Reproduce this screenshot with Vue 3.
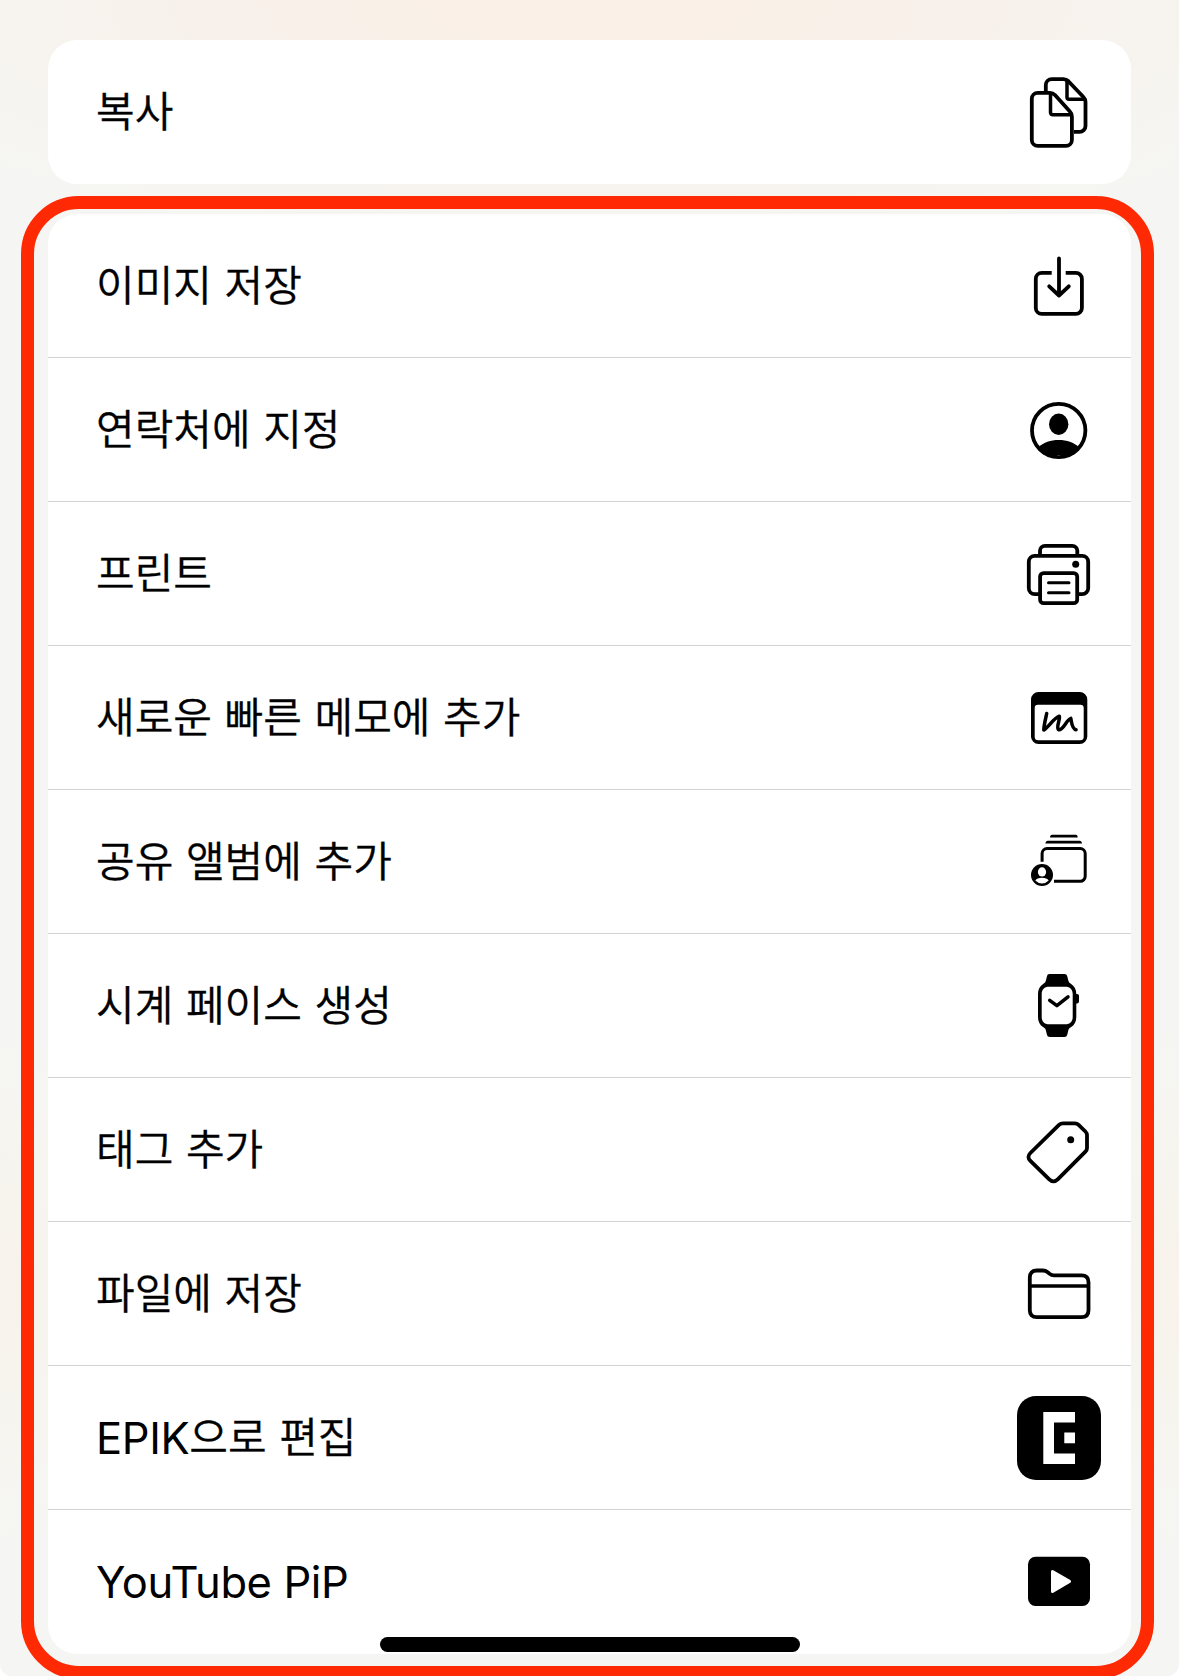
<template>
  <div class="share-sheet">
    <section class="card">
      <div class="row">
        <span class="label">복사</span>
        <svg class="icon" viewBox="0 0 84 84">
          <path d="M28.8 21V15.1a6 6 0 0 1 6-6h11.6c2 0 3.5.6 5 2.1L66.4 27c1.4 1.4 2.1 3 2.1 5v23.9a6 6 0 0 1-6 6H57" />
          <path class="fold" d="M50 11v16.2a2 2 0 0 0 2 2h15.5" />
          <path d="M33 22.8H20.8a6 6 0 0 0-6 6v41.1a6 6 0 0 0 6 6h28.1a6 6 0 0 0 6-6V46.5c0-2-.6-3.5-2-4.900L38 25c-1.500-1.500-3-2.200-5-2.200Z" />
          <path class="fold" d="M33.500 24v18.600a2.200 2.200 0 0 0 2.200 2.200H54" />
        </svg>
      </div>
    </section>

    <section class="card">
      <div v-for="item in actions" :key="item.icon" class="row">
        <span class="label"><span v-if="item.latin" class="latin">{{ item.latin }}</span>{{ item.label }}</span>

        <svg class="icon" viewBox="0 0 84 84">
          <g v-if="item.icon === 'save'">
            <path d="M34.700 28.800h-9.900a6 6 0 0 0-6 6v29.100a6 6 0 0 0 6 6h34.100a6 6 0 0 0 6-6V34.800a6 6 0 0 0-6-6H48.700" />
            <path class="round" d="M42 14.300v36.800M32.200 42.300l9.800 9.200 9.800-9.200" />
          </g>

          <g v-else-if="item.icon === 'contact'">
            <circle cx="41.700" cy="42.500" r="26.700" />
            <ellipse class="solid" cx="41.700" cy="36.300" rx="9.700" ry="10.700" />
            <path class="solid" d="M22 59c4.500-4.800 11.500-7 19.700-7s15.200 2.200 19.700 7v2l-5 6H27l-5-6Z" />
          </g>

          <g v-else-if="item.icon === 'print'">
            <path d="M23 23v-4.200a5 5 0 0 1 5-5h27.300a5 5 0 0 1 5 5V23" />
            <path d="M22 62.200h-4.200a6 6 0 0 1-6-6V29.800a6 6 0 0 1 6-6h47.400a6 6 0 0 1 6 6v26.400a6 6 0 0 1-6 6H61" />
            <rect x="23.100" y="41.100" width="37.100" height="30.100" rx="3.500" />
            <path class="thin round" d="M31.500 50.700h20.500M31.500 60.700h20.500" />
            <circle class="solid" cx="58.700" cy="32.300" r="3.500" />
          </g>

          <g v-else-if="item.icon === 'memo'">
            <path class="solid" fill-rule="evenodd" d="M21.500 16h41.300a7.500 7.500 0 0 1 7.500 7.500v37a7.500 7.500 0 0 1-7.500 7.500H21.500a7.500 7.500 0 0 1-7.500-7.500v-37a7.500 7.500 0 0 1 7.500-7.500ZM21 28.700a3.300 3.300 0 0 0-3.300 3.300v28.800a3.500 3.500 0 0 0 3.500 3.500h42a3.500 3.500 0 0 0 3.500-3.500V32a3.300 3.300 0 0 0-3.300-3.300Z" />
            <path class="fold round" d="M29.700 37.500c-1 5-2.800 11.500-2.900 16.600C31.500 51 37 42 42.300 40.200c1.200 3-3.600 11-.7 13.600 4.600 1 8-10.300 12.200-11.400.8 3.500 1 10.600 5.300 11.300" />
          </g>

          <g v-else-if="item.icon === 'album'">
            <path class="solid" d="M35 14.800h24c.9 0 1.700 1.200 1.700 2.600H33c0-1.400 1-2.600 2-2.600ZM31 20.800h31.500c1.400 0 2.500 1.200 2.500 2.700H28.400c0-1.500 1.100-2.700 2.600-2.700Z" />
            <path class="thin" d="M25.100 41.700v-8.100a5 5 0 0 1 5-5h33.100a5 5 0 0 1 5 5v22.700a5 5 0 0 1-5 5H37" />
            <circle class="solid" cx="25" cy="55" r="11" />
            <ellipse class="paper" cx="25" cy="51.900" rx="4.100" ry="4.600" />
            <path class="paper" d="M18.300 60.500c1.200-1.900 3.600-2.800 6.700-2.800s5.500.9 6.700 2.800a9.200 9.200 0 0 1-13.400 0Z" />
          </g>

          <g v-else-if="item.icon === 'watch'">
            <path class="solid" fill-rule="evenodd" d="M32.500 10h14.700c1.800 0 2.700.8 3.100 2.500l1 4c.5 1.700 1 2.300 2.500 3.200 3.700 2.300 5.500 5.600 5.500 10.300h.7c1.300 0 2 .8 2 2.200v5c0 1.400-.7 2.200-2 2.200h-.7V53c0 4.700-1.800 8-5.500 10.300-1.500.9-2 1.500-2.500 3.200l-1 4c-.4 1.700-1.300 2.500-3.100 2.500H33c-1.800 0-2.700-.8-3.100-2.500l-1-4c-.5-1.700-1-2.300-2.500-3.200C22.800 61 21 57.700 21 53V30c0-4.700 1.800-8 5.400-10.300 1.500-.9 2-1.500 2.500-3.200l1-4c.4-1.700 1.100-2.500 2.600-2.500ZM32 22.700c-4.600 0-7.300 2.700-7.300 7.300v23c0 4.600 2.700 7.300 7.300 7.300h16.400c4.600 0 7.300-2.700 7.300-7.300V30c0-4.600-2.700-7.300-7.300-7.300Z" />
            <path class="fold round" d="m32.700 36.300 7.200 5.400L51 32.800" />
          </g>

          <g v-else-if="item.icon === 'tag'">
            <path d="M46 15.400h11.800c1.600 0 2.700.4 3.800 1.500l6.800 6.600c1.100 1.100 1.600 2.200 1.600 3.800v12.600c0 1.600-.5 2.700-1.600 3.800L41 71.200c-3 3-6 3-9 0L13.400 52.800c-2.600-2.600-2.600-5.200 0-7.800L42 16.900c1.200-1.100 2.400-1.500 4-1.500Z" />
            <circle class="solid" cx="53.700" cy="31.700" r="3.500" />
          </g>

          <g v-else-if="item.icon === 'folder'">
            <path d="M12.800 25.500c0-4.700 2.400-7 7-7h6c2 0 3.400.5 4.900 1.700l2 1.700c1.300 1.100 2.500 1.500 4.300 1.500h27.500c4.600 0 7 2.300 7 6.900v28c0 4.600-2.400 6.900-7 6.900H19.800c-4.600 0-7-2.300-7-6.900Z" />
            <path class="fold" d="M13 34h58" />
          </g>

          <g v-else-if="item.icon === 'epik'">
            <rect class="solid" width="84" height="84" rx="19" />
            <path class="paper" d="M26.300 16H58v10.400H37v31h21V68H26.300ZM47.300 36.400H58v10.900H47.300Z" />
          </g>

          <g v-else>
            <rect class="solid" x="11" y="16.700" width="62" height="49.300" rx="7.500" />
            <path class="play" d="M35.500 31.500v20L52.500 41.400Z" />
          </g>
        </svg>
      </div>
    </section>

    <div class="highlight"></div>
    <div class="home-indicator"></div>
  </div>
</template>

<script setup>
const actions = [
  { icon: 'save', label: '이미지 저장' },
  { icon: 'contact', label: '연락처에 지정' },
  { icon: 'print', label: '프린트' },
  { icon: 'memo', label: '새로운 빠른 메모에 추가' },
  { icon: 'album', label: '공유 앨범에 추가' },
  { icon: 'watch', label: '시계 페이스 생성' },
  { icon: 'tag', label: '태그 추가' },
  { icon: 'folder', label: '파일에 저장' },
  { icon: 'epik', latin: 'EPIK', label: '으로 편집' },
  { icon: 'youtube', latin: 'YouTube PiP', label: '' }
];
</script>

<style>
body {
  background: #ffffff;
}
</style>

<style scoped>
.share-sheet {
  position: relative;
  display: flex;
  flex-direction: column;
  gap: 30px;
  box-sizing: border-box;
  width: 1179px;
  height: 1676px;
  padding: 40px 48px 22px;
  overflow: hidden;
  border-radius: 0 0 12px 12px;
  background:
    radial-gradient(ellipse 800px 260px at 50% 0, #faf0e8 0%, #f9f0e9 35%, rgba(249, 240, 233, 0) 100%),
    radial-gradient(ellipse 110px 260px at 0 1290px, #f8f3eb 0%, rgba(248, 243, 235, 0) 100%),
    radial-gradient(ellipse 110px 260px at 100% 1290px, #f8f3eb 0%, rgba(248, 243, 235, 0) 100%),
    #f5f6f3;
}

.card {
  overflow: hidden;
  border-radius: 29px;
  background: #ffffff;
}

.row {
  display: flex;
  align-items: center;
  justify-content: space-between;
  box-sizing: border-box;
  height: 144px;
  padding: 0 30px 0 48px;
}

.row:not(:last-child) {
  box-shadow: inset 0 -1px #d3d3d4;
}

.label {
  padding-bottom: 6px;
  color: #000000;
  font-family: 'Noto Sans CJK KR', sans-serif;
  font-size: 42px;
  font-weight: 350;
  line-height: 60px;
  white-space: nowrap;
  word-spacing: 3.3px;
  -webkit-text-stroke: 0.35px #000000;
}

.latin {
  font-family: Inter, sans-serif;
  font-size: 43.5px;
  font-weight: 400;
  letter-spacing: -0.4px;
  line-height: 1;
  vertical-align: -1px;
  word-spacing: 0;
  -webkit-text-stroke: 0;
}

.icon {
  width: 84px;
  height: 84px;
  fill: none;
  stroke: #000000;
  stroke-width: 3.8;
  stroke-linejoin: round;
}

.thin {
  stroke-width: 3;
}

.fold {
  stroke-width: 3.5;
}

.round {
  stroke-linecap: round;
}

.solid {
  fill: #000000;
  stroke: none;
}

.paper {
  fill: #ffffff;
  stroke: none;
}

.play {
  fill: #ffffff;
  stroke: #ffffff;
  stroke-width: 3;
}

/* red frame drawn over the list */
.highlight {
  position: absolute;
  top: 196px;
  left: 21px;
  box-sizing: border-box;
  width: 1133px;
  height: 1483px;
  border: 13px solid #ff2a04;
  border-radius: 58px;
}

.home-indicator {
  position: absolute;
  bottom: 24px;
  left: 380px;
  width: 420px;
  height: 15px;
  border-radius: 8px;
  background: #000000;
}
</style>
